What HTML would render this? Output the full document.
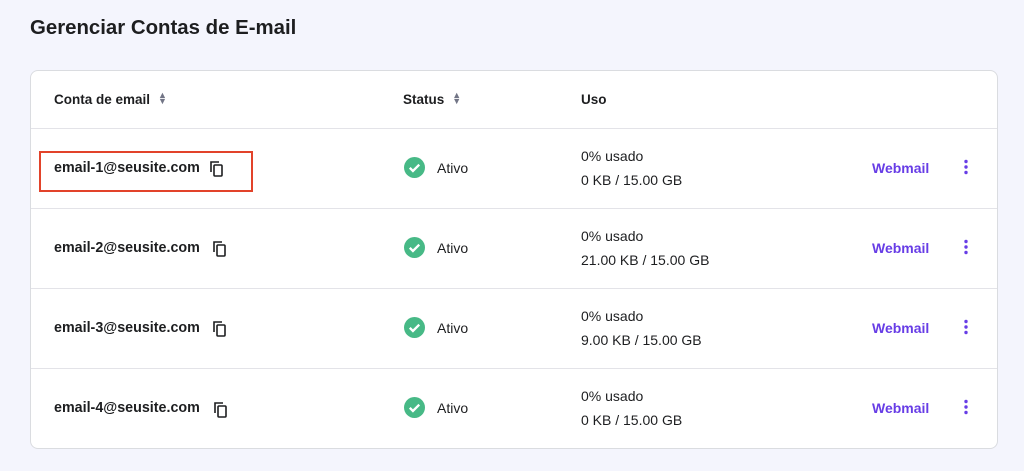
<!DOCTYPE html><html><head><style>
body{margin:0;width:1024px;height:471px;background:#f4f5fd;font-family:"Liberation Sans",sans-serif;color:#2f1c6a;position:relative;overflow:hidden}
h1{position:absolute;left:30px;top:17px;margin:0;font-size:20.4px;font-weight:bold;color:#1d1e20}
.card{position:absolute;left:30px;top:70px;width:968px;height:379px;background:#fff;border:1px solid #dadce0;border-radius:8px;box-sizing:border-box}
.row{position:absolute;left:0;width:966px;height:80px;border-top:1px solid #e3e3e8;font-size:14px;color:#1d1e20}
.hd{position:absolute;top:0;height:57px;left:0;width:966px;font-size:13.5px;font-weight:bold;color:#1d1e20}
.a{position:absolute}
.sort{display:inline-block;margin-left:8px;font-size:9px;color:#727586;vertical-align:0px;line-height:6px}
.em{left:23px;top:31px;font-weight:bold;font-size:14.3px}
.st{left:373px;top:28px}
.st span{position:absolute;left:33px;top:3px;white-space:nowrap}
.u1{left:550px;top:19px}.u2{left:550px;top:43px}
.wm{left:841px;top:31px;color:#673de6;font-weight:bold}
.dots{left:932px;top:30px}
</style></head><body>
<h1>Gerenciar Contas de E-mail</h1>
<div class="card">
<div class="hd"><div class="a" style="left:23px;top:21px">Conta de email<span class="sort">▲<br>▼</span></div><div class="a" style="left:372px;top:21px">Status<span class="sort">▲<br>▼</span></div><div class="a" style="left:550px;top:21px">Uso</div></div>
<div class="row" style="top:57px"><div class="a em">email-1@seusite.com</div><div class="a st"><svg width="21" height="21" viewBox="0 0 20 20"><circle cx="10" cy="10" r="10" fill="#47b986"/><path d="M5.5 10.3l3 3 6-6" stroke="#fff" stroke-width="2.2" fill="none"/></svg><span>Ativo</span></div><div class="a u1">0% usado</div><div class="a u2">0 KB / 15.00 GB</div><div class="a wm">Webmail</div><div class="a dots"><svg width="6" height="16"><circle cx="3" cy="2.5" r="1.7" fill="#673de6"/><circle cx="3" cy="8" r="1.7" fill="#673de6"/><circle cx="3" cy="13.5" r="1.7" fill="#673de6"/></svg></div></div>
<div class="row" style="top:137px"><div class="a em">email-2@seusite.com</div><div class="a st"><svg width="21" height="21" viewBox="0 0 20 20"><circle cx="10" cy="10" r="10" fill="#47b986"/><path d="M5.5 10.3l3 3 6-6" stroke="#fff" stroke-width="2.2" fill="none"/></svg><span>Ativo</span></div><div class="a u1">0% usado</div><div class="a u2">21.00 KB / 15.00 GB</div><div class="a wm">Webmail</div><div class="a dots"><svg width="6" height="16"><circle cx="3" cy="2.5" r="1.7" fill="#673de6"/><circle cx="3" cy="8" r="1.7" fill="#673de6"/><circle cx="3" cy="13.5" r="1.7" fill="#673de6"/></svg></div></div>
<div class="row" style="top:217px"><div class="a em">email-3@seusite.com</div><div class="a st"><svg width="21" height="21" viewBox="0 0 20 20"><circle cx="10" cy="10" r="10" fill="#47b986"/><path d="M5.5 10.3l3 3 6-6" stroke="#fff" stroke-width="2.2" fill="none"/></svg><span>Ativo</span></div><div class="a u1">0% usado</div><div class="a u2">9.00 KB / 15.00 GB</div><div class="a wm">Webmail</div><div class="a dots"><svg width="6" height="16"><circle cx="3" cy="2.5" r="1.7" fill="#673de6"/><circle cx="3" cy="8" r="1.7" fill="#673de6"/><circle cx="3" cy="13.5" r="1.7" fill="#673de6"/></svg></div></div>
<div class="row" style="top:297px"><div class="a em">email-4@seusite.com</div><div class="a st"><svg width="21" height="21" viewBox="0 0 20 20"><circle cx="10" cy="10" r="10" fill="#47b986"/><path d="M5.5 10.3l3 3 6-6" stroke="#fff" stroke-width="2.2" fill="none"/></svg><span>Ativo</span></div><div class="a u1">0% usado</div><div class="a u2">0 KB / 15.00 GB</div><div class="a wm">Webmail</div><div class="a dots"><svg width="6" height="16"><circle cx="3" cy="2.5" r="1.7" fill="#673de6"/><circle cx="3" cy="8" r="1.7" fill="#673de6"/><circle cx="3" cy="13.5" r="1.7" fill="#673de6"/></svg></div></div>
</div>
<svg style="position:absolute;left:209px;top:160px" width="16" height="18"><path d="M2 12V2h8" stroke="#1d1e20" stroke-width="1.6" fill="none"/><rect x="5" y="5" width="8" height="11" rx="1" stroke="#1d1e20" stroke-width="1.6" fill="none"/></svg>
<svg style="position:absolute;left:212px;top:240px" width="16" height="18"><path d="M2 12V2h8" stroke="#1d1e20" stroke-width="1.6" fill="none"/><rect x="5" y="5" width="8" height="11" rx="1" stroke="#1d1e20" stroke-width="1.6" fill="none"/></svg>
<svg style="position:absolute;left:212px;top:320px" width="16" height="18"><path d="M2 12V2h8" stroke="#1d1e20" stroke-width="1.6" fill="none"/><rect x="5" y="5" width="8" height="11" rx="1" stroke="#1d1e20" stroke-width="1.6" fill="none"/></svg>
<svg style="position:absolute;left:213px;top:401px" width="16" height="18"><path d="M2 12V2h8" stroke="#1d1e20" stroke-width="1.6" fill="none"/><rect x="5" y="5" width="8" height="11" rx="1" stroke="#1d1e20" stroke-width="1.6" fill="none"/></svg>
<div style="position:absolute;left:39px;top:151px;width:210px;height:37px;border:2px solid #e2432a"></div>
</body></html>
